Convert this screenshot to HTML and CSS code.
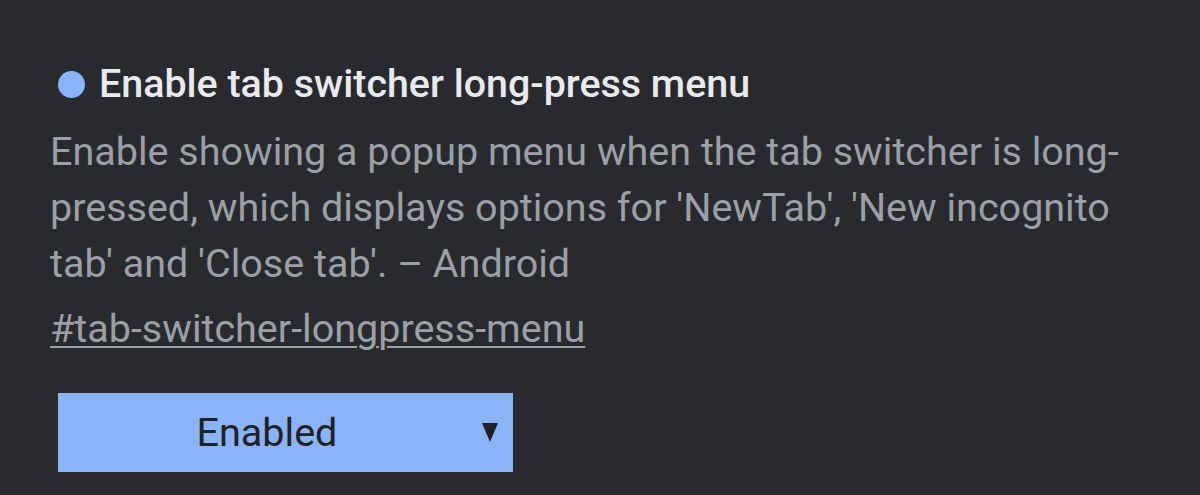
FILE: index.html
```html
<!DOCTYPE html>
<html>
<head>
<meta charset="utf-8">
<link rel="stylesheet" href="styles.css">
</head>
<body>
<div class="experiment">
  <div class="title-row">
    <span class="dot"></span>
    <h2 class="title">Enable tab switcher long-press menu</h2>
  </div>
  <p class="desc">Enable showing a popup menu when the tab switcher is long-pressed, which displays options for 'NewTab', 'New incognito tab' and 'Close tab'. – Android</p>
  <a class="permalink" href="#tab-switcher-longpress-menu">#tab-switcher-longpress-menu</a>
  <div class="select-wrap">
    <div class="select">
      <span class="select-label">Enabled</span>
      <span class="arrow"></span>
    </div>
  </div>
</div>
</body>
</html>
```
FILE: styles.css
```css
html, body {
  margin: 0;
  padding: 0;
  background: #292a2d;
  height: 100%;
}
body {
  font-family: Roboto, "Liberation Sans", sans-serif;
  overflow: hidden;
}
.experiment {
  padding: 56px 0 0 50px;
  width: 1110px;
}
.title-row {
  display: flex;
  align-items: center;
  height: 56px;
}
.dot {
  width: 27px;
  height: 27px;
  border-radius: 50%;
  background: #8ab4f8;
  margin-left: 8px;
  margin-right: 14px;
  flex: none;
}
.title {
  margin: 0;
  font-size: 39.4px;
  font-weight: 500;
  color: #e8eaed;
  line-height: 56px;
}
.desc {
  margin: 12px 0 0;
  font-size: 39.5px;
  line-height: 56px;
  color: #9aa0a6;
}
.permalink {
  display: inline-block;
  margin-top: 9px;
  font-size: 39.5px;
  line-height: 56px;
  color: #9aa0a6;
  text-decoration: underline;
  text-decoration-thickness: 2px;
  text-underline-offset: 4px;
}
.select-wrap {
  margin-top: 36px;
  padding-left: 8px;
}
.select {
  width: 455px;
  height: 79px;
  background: #8ab4f8;
  display: flex;
  align-items: center;
}
.select-label {
  width: 418px;
  text-align: center;
  font-size: 39.5px;
  color: #202124;
}
.arrow {
  width: 0;
  height: 0;
  margin-left: 6px;
  border-left: 8.5px solid transparent;
  border-right: 8.5px solid transparent;
  border-top: 19px solid #202124;
}
```
